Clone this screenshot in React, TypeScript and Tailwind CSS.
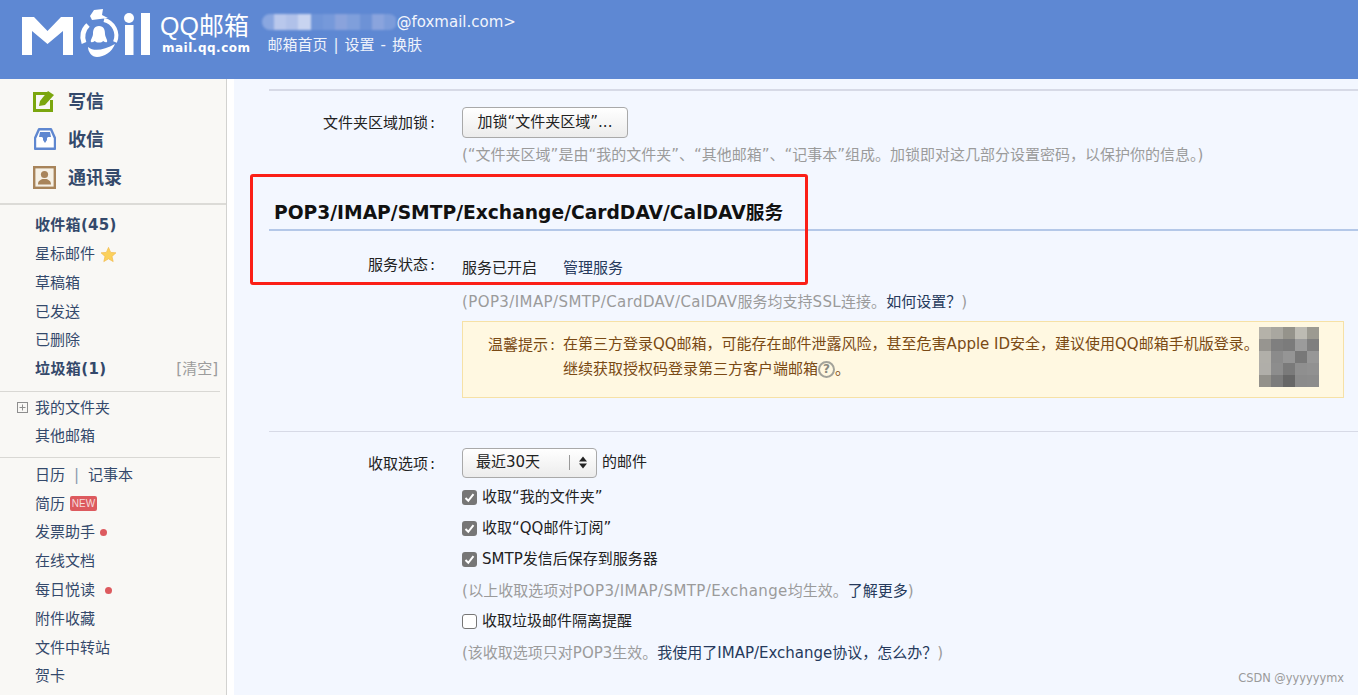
import React from "react";

const font = "[font-family:'DejaVu_Sans','Noto_Sans_CJK_SC',sans-serif]";

const mosaic = [
  "bg-[#b5b2a9]", "bg-[#a9a7a0]", "bg-[#95938b]", "bg-[#bdbbb3]", "bg-[#9c9a91]",
  "bg-[#979590]", "bg-[#7f7f7f]", "bg-[#7b7b7b]", "bg-[#9b9b9b]", "bg-[#7f7f7f]",
  "bg-[#b1afa9]", "bg-[#8b8b8b]", "bg-[#959595]", "bg-[#787878]", "bg-[#979797]",
  "bg-[#b0aea9]", "bg-[#8d8d8d]", "bg-[#7a7a7a]", "bg-[#8f8f8f]", "bg-[#919191]",
  "bg-[#93918b]", "bg-[#7c7c7c]", "bg-[#676767]", "bg-[#8b8b8b]", "bg-[#8c8c8c]",
];

const blurCells = [
  "bg-[#8aa7e0]", "bg-[#b9c8ec]", "bg-[#b0c1e9]", "bg-[#c8d4f0]", "bg-[#7095d8]",
  "bg-[#7699da]", "bg-[#8aa3dc]", "bg-[#7f9fdb]", "bg-[#6d92d6]", "bg-[#8aa4dd]", "bg-[#7c9cda]",
];

function Check({ on, label }: { on: boolean; label: string }) {
  return (
    <div className="flex h-[31px] items-center gap-[5px]">
      {on ? (
        <span className="flex h-[15px] w-[15px] items-center justify-center rounded-[3px] bg-[#767676]">
          <svg width="11" height="11" viewBox="0 0 11 11" fill="none">
            <path d="M1.5 6 L4.3 8.8 L9.5 2.2" stroke="#fff" strokeWidth="2" />
          </svg>
        </span>
      ) : (
        <span className="h-[15px] w-[15px] rounded-[3px] border border-[#767676] bg-white" />
      )}
      <span className="text-[15px] text-[#222]">{label}</span>
    </div>
  );
}

function SideItem({ children, bold }: { children: React.ReactNode; bold?: boolean }) {
  return (
    <div className={`flex h-[28.8px] items-center pl-[35px] text-[15px] text-[#34496b] ${bold ? "font-bold" : ""}`}>
      {children}
    </div>
  );
}

function Dot({ className }: { className: string }) {
  return <span className={`h-[7px] w-[7px] rounded-full bg-[#dd5a5e] ${className}`} />;
}

function Sidebar() {
  return (
    <aside className="flex h-[616px] w-[227px] shrink-0 flex-col overflow-hidden border-r border-[#d2d2d0] bg-[#f9f8f5]">
      <div className="flex h-[124px] flex-col pt-[3px]">
        <div className="flex h-[38px] items-center gap-[14px] pl-[33px] text-[18px] font-bold text-[#34496b]">
          <svg width="21" height="21" viewBox="0 0 21 21">
            <path d="M0 1h14v3H3v14h14V9h3v12H0z" fill="#7ba60e" />
            <path d="M7 10 L15 0 L21 4 L12 14 L6 15z" fill="#7ba60e" />
          </svg>
          写信
        </div>
        <div className="flex h-[38px] items-center gap-[12px] pl-[34px] text-[18px] font-bold text-[#34496b]">
          <svg width="22" height="23" viewBox="0 0 22 23">
            <path d="M5 1.200h12l4 9v10.600H1V10.200z" fill="#fff" stroke="#5f87d0" strokeWidth="2.400" strokeLinejoin="round" />
            <path d="M6 4h10l1 5h-3l-1 1v2l-2 3-2-3v-2l-1-1H5z" fill="#5f87d0" />
          </svg>
          收信
        </div>
        <div className="flex h-[38px] items-center gap-[12px] pl-[33px] text-[18px] font-bold text-[#34496b]">
          <svg width="23" height="23" viewBox="0 0 23 23">
            <rect x="1.200" y="1.200" width="20.600" height="20.600" fill="#f6f1e6" stroke="#a8845a" strokeWidth="2.400" />
            <circle cx="11.500" cy="8.500" r="3.600" fill="#a8845a" />
            <path d="M5 18.500c0-4 2.500-4.500 4.500-5.500h4c2 1 4.500 1.500 4.500 5.500z" fill="#a8845a" />
          </svg>
          通讯录
        </div>
      </div>
      <div className="h-[2px] w-[226px] bg-[#dcdbd7]" />
      <div className="h-[6px]" />
      <SideItem bold><span className="tracking-[0.3px]">收件箱(45)</span></SideItem>
      <SideItem>
        星标邮件
        <svg className="ml-[5px]" width="17" height="17" viewBox="0 0 24 24">
          <path d="M12 2l3 7 7.500.7-5.600 5 1.700 7.300-6.600-3.900L5.400 22l1.700-7.300-5.600-5L9 9z" fill="#fbd15b" stroke="#f2b94a" strokeWidth="1" />
        </svg>
      </SideItem>
      <SideItem>草稿箱</SideItem>
      <SideItem>已发送</SideItem>
      <SideItem>已删除</SideItem>
      <div className="flex h-[28.8px] items-center justify-between pl-[35px] pr-[8px] text-[15px] text-[#34496b]">
        <span className="font-bold tracking-[0.4px]">垃圾箱(1)</span>
        <span className="text-[#9c9c9c]">[清空]</span>
      </div>
      <div className="mt-[7px] h-px w-[220px] bg-[#d9d8d4]" />
      <div className="mt-[2px] flex h-[28px] items-center pl-[17px] text-[15px] text-[#34496b]">
        <svg className="mr-[7px]" width="11" height="11" viewBox="0 0 11 11" fill="none" stroke="#8e8e8e">
          <rect x="0.500" y="0.500" width="10" height="10" />
          <path d="M5.500 2.500v6M2.500 5.500h6" />
        </svg>
        我的文件夹
      </div>
      <SideItem>其他邮箱</SideItem>
      <div className="mt-[6px] h-px w-[220px] bg-[#d9d8d4]" />
      <div className="h-[3px]" />
      <SideItem>
        日历<span className="mx-[9px] text-[#8a97ad]">|</span>记事本
      </SideItem>
      <SideItem>
        简历
        <span className="ml-[5px] flex h-[15px] w-[27px] items-center justify-center rounded-[2px] bg-[#dd5a5e] text-[10px] text-[#f5dcdc] [font-family:'Liberation_Sans',sans-serif]">
          NEW
        </span>
      </SideItem>
      <SideItem>
        发票助手<Dot className="ml-[5px]" />
      </SideItem>
      <SideItem>在线文档</SideItem>
      <SideItem>
        每日悦读<Dot className="ml-[10px]" />
      </SideItem>
      <SideItem>附件收藏</SideItem>
      <SideItem>文件中转站</SideItem>
      <SideItem>贺卡</SideItem>
    </aside>
  );
}

function Logo() {
  return (
    <div className="flex items-start text-white">
      <svg width="135" height="55" viewBox="21 5 135 55" className="shrink-0">
        <polygon points="22,55 22,17 34,17 47.500,31 61,17 73,17 73,55 63,55 63,31 47.500,44 32,31 32,55" fill="#fff" />
        <path d="M90 16 L94 10 L103 9 L102 15 L108 18 L92 20z" fill="#fff" />
        <path d="M104 20 A16 16 0 0 1 115 42" fill="none" stroke="#fff" strokeWidth="4" />
        <path d="M88 25 A16 16 0 0 0 84 43" fill="none" stroke="#fff" strokeWidth="5" />
        <path d="M88 47 C94 52 104 50 115 44 C112 52 104 57 97 57 C92 57 88 52 88 47z" fill="#fff" />
        <path d="M99 26 C94 26 93 30 93 34 C93 37 90 40 91 42 C93 43 94 41 95 41 C96 43 102 43 103 41 C104 41 105 43 107 42 C108 40 105 37 105 34 C105 30 104 26 99 26z" fill="#fff" />
        <circle cx="129" cy="18" r="5" fill="#fff" />
        <rect x="125" y="25" width="8.500" height="30" fill="#fff" />
        <rect x="141" y="13" width="9" height="42" fill="#fff" />
      </svg>
      <div className="ml-[4px] flex flex-col">
        <span className="mt-[9px] h-[24px] text-[25px] leading-[24px] [font-family:'Liberation_Sans','Noto_Sans_CJK_SC',sans-serif]">QQ邮箱</span>
        <span className="mt-[3px] h-[15px] pl-[2px] text-[12px] font-bold leading-[15px] tracking-[0.5px] [font-family:'DejaVu_Sans',sans-serif]">mail.qq.com</span>
      </div>
    </div>
  );
}

function Header() {
  return (
    <header className="flex h-[79px] items-start bg-[#5e88d3] pl-[21px] pt-[5px] text-white">
      <Logo />
      <div className="ml-[11px] flex flex-col pt-[7px]">
        <div className="flex h-[20px] items-center">
          <div className="flex h-[16px] w-[135px] overflow-hidden rounded-full blur-[1px]">
            {blurCells.map((c, i) => (
              <span key={i} className={`h-full flex-1 ${c}`} />
            ))}
          </div>
          <span className="text-[15px] text-[#f2f5fc]">@foxmail.com&gt;</span>
        </div>
        <div className="mt-[3px] flex h-[20px] items-center pl-[6px] text-[15px] text-[#eef2fb]">
          邮箱首页<span className="mx-[6px]">|</span>设置<span className="mx-[6px]">-</span>换肤
        </div>
      </div>
    </header>
  );
}

function Colon() {
  return <span className="ml-[2px]">:</span>;
}

function Main() {
  return (
    <main className="ml-[7px] h-[616px] flex-1 overflow-hidden bg-[#f3f7ff] pl-[35px] pt-[10px] text-[15px] text-[#222]">
      <div className="h-[1.500px] bg-[#d7dae6]" />
      {/* folder lock */}
      <div className="mt-[16px] flex items-start">
        <div className="w-[166px] pt-[5px] text-right">文件夹区域加锁<Colon /></div>
        <div className="ml-[27px] flex h-[31px] w-[166px] items-center justify-center rounded-[4px] border border-[#a9a9a9] bg-gradient-to-b from-white to-[#ececec] text-[#222]">
          加锁“文件夹区域”...
        </div>
      </div>
      <div className="ml-[193px] mt-[7px] h-[20px] leading-[20px] text-[#9b9b9b]">
        (“文件夹区域”是由“我的文件夹”、“其他邮箱”、“记事本”组成。加锁即对这几部分设置密码，以保护你的信息。)
      </div>
      {/* section heading */}
      <div className="mt-[36px] h-[28px] pl-[5px] text-[18.700px] font-bold leading-[24px] text-[#111]">
        POP3/IMAP/SMTP/Exchange/CardDAV/CalDAV服务
      </div>
      <div className="h-[2px] bg-[#b4c8e8]" />
      <div className="mt-[25px] flex h-[24px] items-center">
        <div className="-mt-[5px] w-[166px] text-right">服务状态<Colon /></div>
        <span className="ml-[27px] mt-[2px]">服务已开启</span>
        <span className="ml-[26px] mt-[2px] text-[#263a5c]">管理服务</span>
      </div>
      <div className="ml-[193px] mt-[12px] h-[20px] leading-[20px] text-[#9b9b9b]">
        <span className="tracking-[0.4px]">(POP3/IMAP/SMTP/CardDAV/CalDAV</span>服务均支持<span className="tracking-[0.4px]">SSL</span>连接。<span className="text-[#263a5c]">如何设置？</span>)
      </div>
      {/* tip */}
      <div className="ml-[193px] mr-[14px] mt-[9px] flex h-[77px] border border-[#f6e1a6] bg-[#fff8e1] pl-[25px] pt-[5px] text-[#7a4a14]">
        <div className="w-[75px] shrink-0 leading-[36px]">温馨提示<Colon /></div>
        <div className="flex-1 leading-[25px]">
          <div className="mt-[5px]">在第三方登录QQ邮箱，可能存在邮件泄露风险，甚至危害Apple ID安全，建议使用QQ邮箱手机版登录。</div>
          <div className="flex items-center">
            继续获取授权码登录第三方客户端邮箱
            <span className="flex h-[17px] w-[17px] items-center justify-center rounded-full border-2 border-[#a3a39a] text-[12px] font-bold text-[#8a8a80]">?</span>
            。
          </div>
        </div>
        <div className="mr-[24px] grid h-[60px] w-[60px] shrink-0 grid-cols-5 grid-rows-5">
          {mosaic.map((c, i) => (
            <span key={i} className={c} />
          ))}
        </div>
      </div>
      <div className="mt-[33px] h-px bg-[#d7dae6]" />
      {/* options */}
      <div className="mt-[16px] flex items-start">
        <div className="w-[166px] pt-[5px] text-right">收取选项<Colon /></div>
        <div className="ml-[27px]">
          <div className="flex items-center gap-[5px]">
            <div className="flex h-[30px] w-[135px] items-center rounded-[4px] border border-[#a9a9a9] bg-gradient-to-b from-white to-[#ececec] pl-[13px]">
              <span className="flex-1">最近30天</span>
              <span className="h-[15px] w-px bg-[#999]" />
              <svg className="mx-[8px]" width="10" height="13" viewBox="0 0 10 13" fill="#222">
                <path d="M5 0.500 L9 5.500 H1z M5 12.500 L9 7.500 H1z" />
              </svg>
            </div>
            <span>的邮件</span>
          </div>
          <div className="mt-[4px]">
            <Check on label="收取“我的文件夹”" />
            <Check on label="收取“QQ邮件订阅”" />
            <Check on label="SMTP发信后保存到服务器" />
          </div>
          <div className="flex h-[31px] items-center pt-[2px] text-[#9b9b9b]">
            <span className="tracking-[0.4px]">(</span>以上收取选项对<span className="tracking-[0.4px]">POP3/IMAP/SMTP/Exchange</span>均生效。<span className="text-[#263a5c]">了解更多</span>)
          </div>
          <Check on={false} label="收取垃圾邮件隔离提醒" />
          <div className="flex h-[31px] items-center pt-[2px] text-[#9b9b9b]">
            (该收取选项只对POP3生效。<span className="text-[#263a5c]">我使用了IMAP/Exchange协议，怎么办？</span>)
          </div>
        </div>
      </div>
    </main>
  );
}

export default function App() {
  return (
    <div className={`relative h-[695px] w-[1358px] overflow-hidden bg-white ${font}`}>
      <Header />
      <div className="flex">
        <Sidebar />
        <Main />
      </div>
      <div className="pointer-events-none absolute left-[250px] top-[174px] h-[111px] w-[558px] rounded-[3px] border-[3px] border-[#fb1f17]" />
      <div className="absolute bottom-[8px] right-[14px] text-[11.400px] text-[#9a9a9a]">CSDN @yyyyyymx</div>
    </div>
  );
}
